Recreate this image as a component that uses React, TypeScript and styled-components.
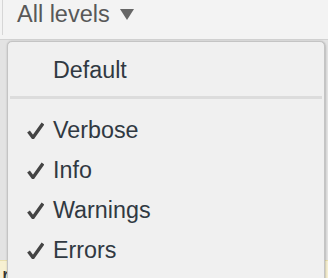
import React from "react";
import styled, { createGlobalStyle } from "styled-components";

const Global = createGlobalStyle`
  html, body { margin: 0; padding: 0; }
  body {
    width: 328px;
    height: 278px;
    overflow: hidden;
    background: #e6e6e6;
    font-family: "Liberation Sans", Arial, sans-serif;
  }
`;

const Page = styled.div`
  position: relative;
  width: 328px;
  height: 278px;
  overflow: hidden;
  display: flex;
  flex-direction: column;
`;

const Toolbar = styled.div`
  height: 39px;
  flex: none;
  display: flex;
  align-items: stretch;
  background: #f3f3f3;
  border-bottom: 1px solid #d2d2d2;
`;

const Divider = styled.div`
  width: 1px;
  margin: 0 0 4px 2px;
  background: #d6d6d6;
`;

const LevelButton = styled.div`
  display: flex;
  align-items: flex-start;
  gap: 10px;
  padding-left: 14px;
  font-size: 23.5px;
  line-height: 28px;
  color: #585858;
`;

const Caret = styled.span`
  width: 0;
  height: 0;
  margin-top: 9px;
  border-left: 7px solid transparent;
  border-right: 7px solid transparent;
  border-top: 11px solid #666;
`;

const Content = styled.div`
  flex: 1;
  display: flex;
  flex-direction: column;
  background: #e3e3e3;
`;

const ConsoleRow = styled.div<{ $warn?: boolean }>`
  height: ${(p) => (p.$warn ? "16px" : "auto")};
  flex: ${(p) => (p.$warn ? "none" : "1")};
  background: ${(p) => (p.$warn ? "#f7f0d2" : "transparent")};
  border-top: ${(p) => (p.$warn ? "1px solid #e9dfae" : "none")};
  font-size: 23px;
  color: #333;
  padding-left: 2px;
  line-height: 28px;
  padding-top: 1px;
  overflow: hidden;
`;

const Menu = styled.div`
  position: absolute;
  top: 41px;
  left: 7px;
  width: 316px;
  height: 234px;
  background: #f0f0f0;
  border: 1px solid #c4c4c4;
  border-radius: 5px;
  box-shadow: 0 0 2px rgba(0, 0, 0, 0.18), 1px 1px 2px rgba(0, 0, 0, 0.12);
  padding-top: 8px;
  display: flex;
  flex-direction: column;
`;

const Item = styled.div`
  height: 40px;
  display: flex;
  align-items: center;
  font-size: 23.3px;
  line-height: 40px;
  color: #303942;
`;

const CheckCell = styled.div`
  width: 45px;
  height: 40px;
  flex: none;
  display: flex;
  align-items: flex-start;
  padding-left: 19px;
  padding-top: 12px;
  box-sizing: border-box;
`;

const Separator = styled.div`
  height: 3px;
  margin: 6px 2px 11px 2px;
  background: #dcdcdc;
`;

const Check = () => (
  <svg width="17" height="17" viewBox="0 0 17 17">
    <path
      d="M1.5 9.5 L6 15.5 L16 1.5"
      fill="none"
      stroke="#444"
      strokeWidth="3.4"
      strokeLinejoin="miter"
    />
  </svg>
);

const items = [
  { label: "Default", checked: false },
  { label: "Verbose", checked: true },
  { label: "Info", checked: true },
  { label: "Warnings", checked: true },
  { label: "Errors", checked: true },
];

export default function App() {
  return (
    <Page>
      <Global />
      <Toolbar>
        <Divider />
        <LevelButton>
          <span>All levels</span>
          <Caret />
        </LevelButton>
      </Toolbar>
      <Content>
        <ConsoleRow />
        <ConsoleRow $warn>r</ConsoleRow>
      </Content>
      <Menu>
        {items.map((it, i) => (
          <React.Fragment key={it.label}>
            <Item>
              <CheckCell>{it.checked ? <Check /> : null}</CheckCell>
              <span>{it.label}</span>
            </Item>
            {i === 0 ? <Separator /> : null}
          </React.Fragment>
        ))}
      </Menu>
    </Page>
  );
}
